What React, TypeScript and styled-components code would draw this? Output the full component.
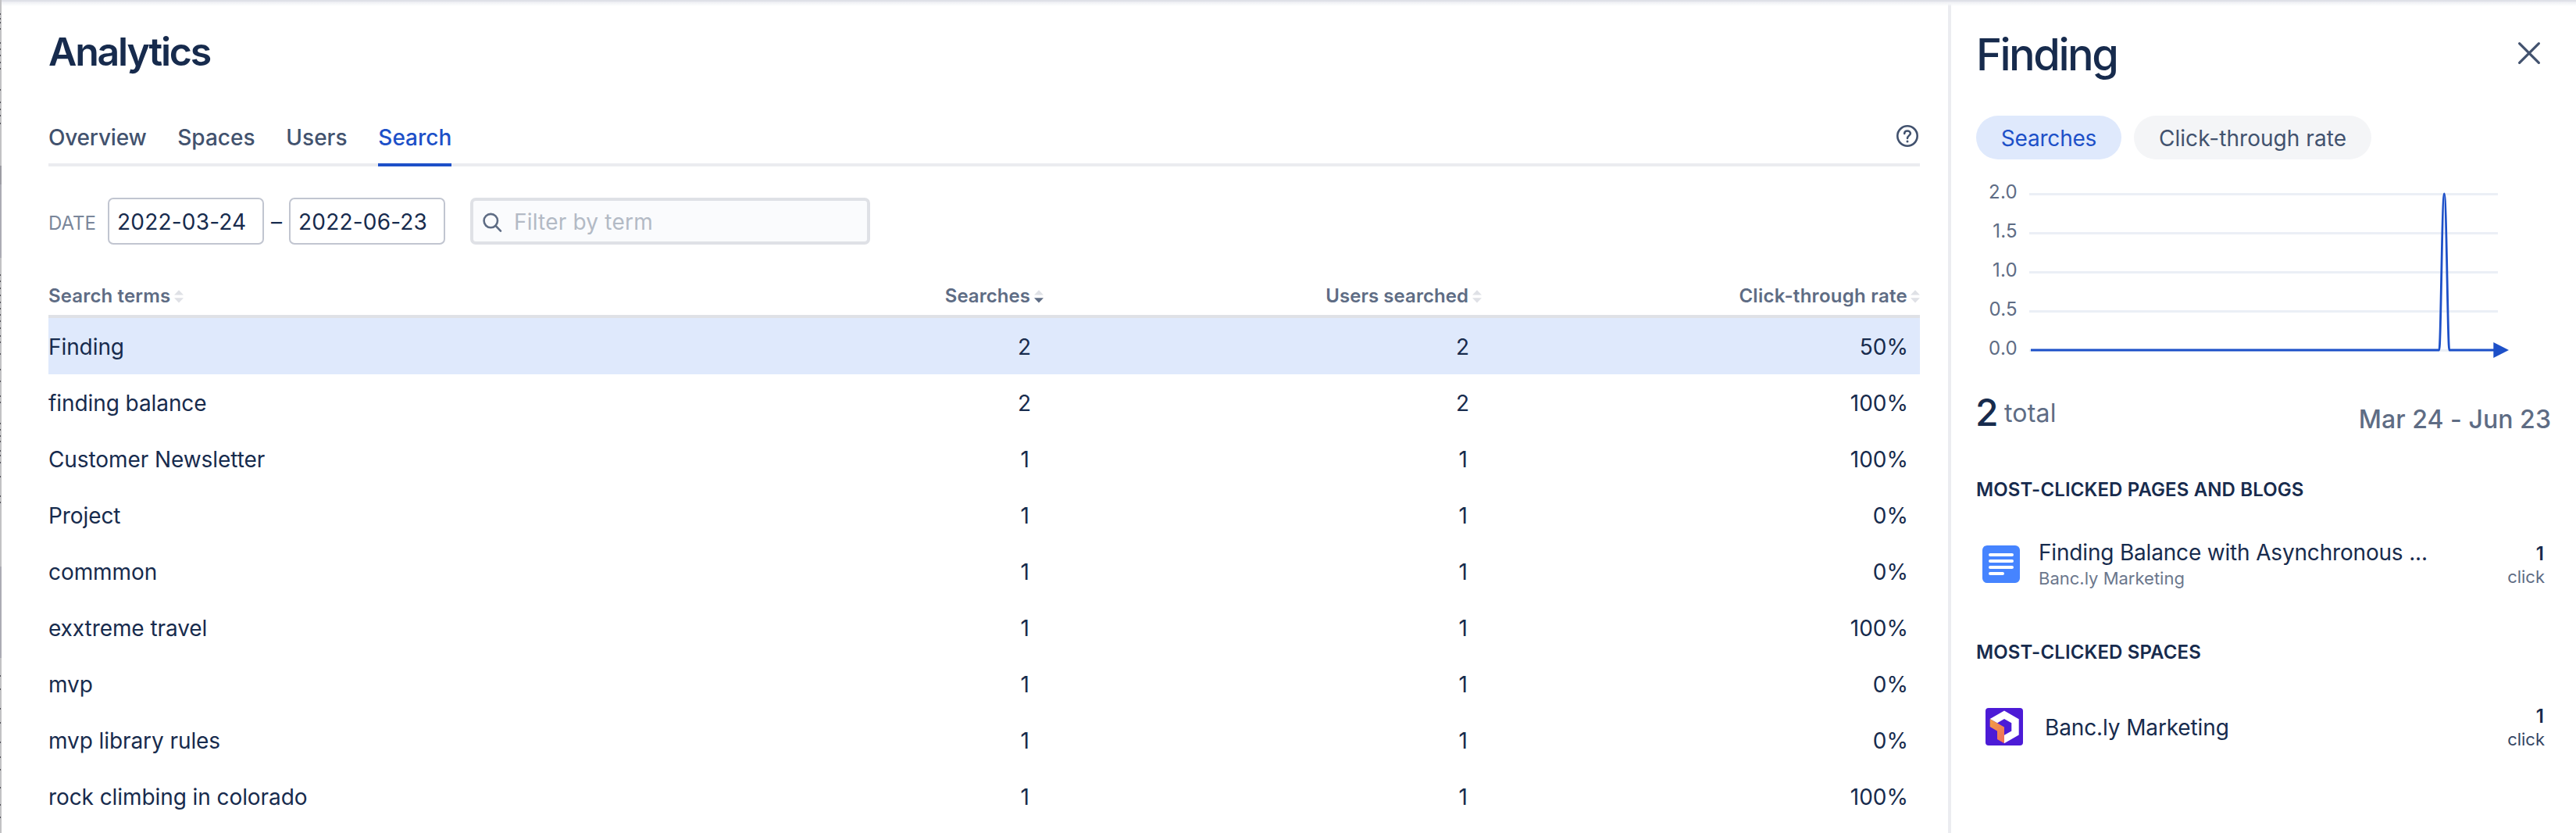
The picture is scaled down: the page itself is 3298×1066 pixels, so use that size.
import React from "react";
import styled, { createGlobalStyle } from "styled-components";

const GlobalStyle = createGlobalStyle`
  * { box-sizing: border-box; }
  body {
    margin: 0;
    background: #ffffff;
    color: #172b4d;
    font-family: Inter, "Liberation Sans", sans-serif;
    font-size: 28px;
  }
`;

const Page = styled.div`
  position: relative;
  display: flex;
  height: 1066px;
  overflow: hidden;
  background: #ffffff;
`;

const TopShadow = styled.div`
  position: absolute;
  top: 0;
  left: 2px;
  right: 0;
  height: 8px;
  background: linear-gradient(#dfe1e8 0 2px, #ebecf1 2px, #f6f7f9 5px, rgba(255, 255, 255, 0) 8px);
`;

/* Sliver of the window behind the page, with its text lines cut off. */
const marks = [
  18, 24, 29, 37, 55, 63, 71, 80, 88, 115, 131, 140, 148, 158, 352, 360, 369, 378, 387, 395, 403, 411,
  420, 430, 438, 453, 473, 488, 507, 515, 542, 550, 558, 565, 577, 583, 592, 610, 635, 643, 865, 882,
  907, 925, 950, 969, 985, 1008, 1030, 1046,
];
const markStops = marks
  .map((y) => `transparent ${y - 1}px, #55555b ${y - 1}px, #55555b ${y + 1}px, transparent ${y + 1}px`)
  .join(", ");

const Edge = styled.div`
  flex: none;
  width: 2px;
  background: linear-gradient(${markStops}) 0 0 / 1px 100% no-repeat,
    linear-gradient(
      #c2c2c4 212px,
      #9c9ca3 212px 236px,
      #acacb4 236px 330px,
      #c2c2c4 330px 725px,
      #acacb4 725px 842px,
      #c2c2c4 842px
    );
`;

const Main = styled.main`
  flex: 1;
  min-width: 0;
  padding: 36px 36px 0 60px;
`;

const Title = styled.h1`
  margin: 0;
  font-size: 50px;
  font-weight: 600;
  line-height: 61px;
  height: 60px;
  letter-spacing: -2.2px;
  color: #172b4d;
`;

const TabBar = styled.nav`
  display: flex;
  gap: 39.8px;
  height: 62px;
  margin-top: 55px;
  box-shadow: inset 0 -4px #ebecf0;
`;

const Tab = styled.div<{ $active?: boolean; $tight?: boolean }>`
  height: 62px;
  line-height: 50px;
  font-weight: 500;
  letter-spacing: ${(p) => (p.$tight ? "-0.2px" : "0")};
  color: ${(p) => (p.$active ? "#1d50c8" : "#42526e")};
  border-bottom: 4px solid ${(p) => (p.$active ? "#1d50c8" : "transparent")};
`;

const HelpButton = styled.div`
  width: 28px;
  height: 28px;
  margin: 9px 2px 0 auto;
  svg { display: block; }
`;

const Filters = styled.div`
  display: flex;
  height: 60px;
  margin-top: 40px;
`;

const FilterLabel = styled.label`
  width: 76px;
  padding-top: 5px;
  font-size: 24px;
  line-height: 56px;
  color: #7a869a;
`;

const DateField = styled.div`
  width: 200px;
  padding: 1px 0 0 10px;
  border: 2px solid #c1c5d0;
  border-radius: 7px;
  line-height: 56px;
  letter-spacing: 0.2px;
`;

const Dash = styled.span`
  width: 32px;
  padding-top: 2px;
  text-align: center;
  line-height: 58px;
`;

const TermField = styled.div`
  display: flex;
  width: 512px;
  margin-left: 32px;
  padding: 1px 0 0 12px;
  border: 4px solid #dfe1e6;
  border-radius: 7px;
  background: #fafbfd;
  line-height: 52px;
  letter-spacing: 0.2px;
  color: #b3bac5;
  svg { flex: none; margin: 14px 14px 0 0; }
`;

const columns = "713px 561px 561px 561px";

const HeadRow = styled.div`
  display: grid;
  grid-template-columns: ${columns};
  height: 53px;
  margin-top: 41px;
  border-bottom: 4px solid #dfe1e6;
  font-size: 24px;
  font-weight: 600;
  line-height: 49px;
  letter-spacing: 0.15px;
  color: #5e6c84;
`;

const HeadCell = styled.div<{ $right?: boolean; $wide?: boolean }>`
  display: flex;
  align-items: center;
  justify-content: ${(p) => (p.$right ? "flex-end" : "flex-start")};
  gap: ${(p) => (p.$wide ? 4 : 5)}px;
  letter-spacing: ${(p) => (p.$wide ? "0.28px" : p.$right ? "0.05px" : "0.15px")};
`;

const Row = styled.div<{ $selected?: boolean }>`
  display: grid;
  grid-template-columns: ${columns};
  height: 72px;
  padding-top: 1px;
  line-height: 72px;
  letter-spacing: -0.08px;
  background: ${(p) => (p.$selected ? "#dfe9fc" : "#ffffff")};
`;

const Num = styled.div<{ $pad: number }>`
  padding-right: ${(p) => p.$pad}px;
  text-align: right;
  letter-spacing: 0;
`;

const Panel = styled.aside`
  flex: none;
  width: 804px;
  border-left: 4px solid #ebecf0;
  padding: 36px 32px 0 32px;
`;

const PanelHead = styled.div`
  display: flex;
  justify-content: space-between;
  height: 68px;
  padding-right: 13px;
  svg { margin-top: 17px; }
`;

const PanelTitle = styled.h2`
  margin: 0;
  font-size: 56px;
  font-weight: 500;
  line-height: 68px;
  letter-spacing: -2.5px;
`;

const Pills = styled.div`
  display: flex;
  gap: 16px;
  margin-top: 44px;
`;

const Pill = styled.div<{ $active?: boolean }>`
  width: ${(p) => (p.$active ? 186 : 304)}px;
  height: 56px;
  padding-top: 1px;
  border-radius: 28px;
  text-align: center;
  line-height: 56px;
  letter-spacing: ${(p) => (p.$active ? "-0.2px" : "0.05px")};
  color: ${(p) => (p.$active ? "#1d50c8" : "#42526e")};
  background: ${(p) => (p.$active ? "#dfe9fc" : "#f4f5f7")};
`;

const Chart = styled.svg`
  display: block;
  text {
    font-family: Inter, sans-serif;
    font-size: 24px;
    letter-spacing: 0.3px;
    fill: #5e6c84;
    text-anchor: end;
  }
`;

const Summary = styled.div`
  display: flex;
  height: 60px;
  margin-top: 37px;
  line-height: 60px;
`;

const Total = styled.span`
  width: 36px;
  margin-left: -1px;
  font-size: 48px;
  font-weight: 500;
  line-height: 61px;
`;

const TotalLabel = styled.span`
  padding-top: 2px;
  margin-left: 1px;
  font-size: 32px;
  letter-spacing: 0.2px;
  color: #5e6c84;
`;

const Range = styled.span`
  margin-left: auto;
  padding-top: 10px;
  font-size: 32px;
  font-weight: 500;
  letter-spacing: 0.05px;
  color: #5e6c84;
`;

const SectionTitle = styled.h3<{ $top: number }>`
  margin: ${(p) => p.$top}px 0 0;
  font-size: 24px;
  font-weight: 600;
  line-height: 30px;
  letter-spacing: 0.12px;
`;

const Item = styled.div<{ $top: number }>`
  display: flex;
  height: 66px;
  margin-top: ${(p) => p.$top}px;
  padding-right: 8px;
`;

const ItemIcon = styled.div<{ $space?: boolean }>`
  margin: ${(p) => (p.$space ? "6px 28px 0 12px" : "6px 24px 0 8px")};
  svg { display: block; }
`;

const ItemText = styled.div``;

const ItemTitle = styled.div<{ $single?: boolean }>`
  line-height: ${(p) => (p.$single ? 62 : 30)}px;
  letter-spacing: ${(p) => (p.$single ? "-0.13px" : "-0.18px")};
  white-space: nowrap;
`;

const ItemSub = styled.div`
  font-size: 22px;
  line-height: 36px;
  color: #6b778c;
`;

const Clicks = styled.div<{ $dark?: boolean }>`
  margin-left: auto;
  text-align: right;
  font-size: 22px;
  line-height: 28px;
  color: ${(p) => (p.$dark ? "#344563" : "#5e6c84")};
  strong {
    display: block;
    padding-right: 1px;
    font-size: 24px;
    font-weight: 600;
    line-height: 33px;
    height: 32px;
    color: #172b4d;
  }
`;

const Sort = ({ down }: { down?: boolean }) => (
  <svg width="12" height="18" viewBox="0 0 12 18">
    <path d="M6 1.2 12 7.4H0z" fill="#dfe1e6" />
    <path d="M6 17.4 0 11.2H12z" fill={down ? "#5e6c84" : "#dfe1e6"} />
  </svg>
);

const HelpIcon = () => (
  <svg width="28" height="28" viewBox="-14 -14 28 28" fill="none" stroke="#42526e">
    <circle r="12.7" strokeWidth="2.6" />
    <path d="M-3.8-3.1C-3.8-5.3-2.1-6.6 0-6.6S3.9-5.1 3.9-3.2C3.9-.8 0-.3 0 3" strokeWidth="2.5" strokeLinecap="round" />
    <circle cy="7" r="1.5" fill="#42526e" stroke="none" />
  </svg>
);

const SearchIcon = () => (
  <svg width="26" height="26" viewBox="0 0 26 26" fill="none" stroke="#5e6c84" strokeWidth="2.6" strokeLinecap="round">
    <circle cx="10.3" cy="10.6" r="8.7" />
    <path d="M16.8 17.2 23 23.6" />
  </svg>
);

const CloseIcon = () => (
  <svg width="30" height="30" viewBox="0 0 30 30" stroke="#42526e" strokeWidth="3.2" strokeLinecap="round">
    <path d="M2.6 2.6 27.4 27.4M27.4 2.6 2.6 27.4" />
  </svg>
);

const PageIcon = () => (
  <svg width="48" height="48" viewBox="0 0 48 48">
    <rect width="48" height="48" rx="6" fill="#4684ff" />
    <path d="M10 12H38M10 20H38M10 28H38M10 36H26" stroke="#fff" strokeWidth="4" strokeLinecap="round" />
  </svg>
);

const SpaceLogo = () => (
  <svg width="48" height="48" viewBox="0 0 48 48">
    <defs>
      <linearGradient id="fold" x1="0" y1="0" x2="0.6" y2="1">
        <stop offset="0" stopColor="#f3a044" />
        <stop offset="1" stopColor="#f0725a" />
      </linearGradient>
    </defs>
    <rect width="48" height="48" rx="4" fill="#4c1bd6" />
    <path d="M24 3.5 42.7 14.2V34.6L24 45.3V34.8L33.3 29.4V19.2L24 14 15 19.2 5.7 14z" fill="#fff" />
    <path d="M5.7 14 24 24.6V45.3L15 40V29.4L5.7 24z" fill="url(#fold)" />
  </svg>
);

const ticks = ["2.0", "1.5", "1.0", "0.5", "0.0"];

const SearchesChart = () => (
  <Chart width="700" height="256" viewBox="0 0 700 256">
    {ticks.map((t, i) => (
      <g key={t}>
        <text x="53" y={50 + i * 50}>{t}</text>
        <rect x="68" y={43 + i * 50} width="600" height="3" fill="#ebeff6" />
      </g>
    ))}
    <path
      d="M70 244H592.8C595 244 596.4 44 599.3 44S603.8 244 605.8 244H664"
      fill="none"
      stroke="#1d50c8"
      strokeWidth="2.8"
    />
    <path d="M662.3 234 682 244 662.3 254z" fill="#1d50c8" />
  </Chart>
);

const rows: [string, string, string, string][] = [
  ["Finding", "2", "2", "50%"],
  ["finding balance", "2", "2", "100%"],
  ["Customer Newsletter", "1", "1", "100%"],
  ["Project", "1", "1", "0%"],
  ["commmon", "1", "1", "0%"],
  ["exxtreme travel", "1", "1", "100%"],
  ["mvp", "1", "1", "0%"],
  ["mvp library rules", "1", "1", "0%"],
  ["rock climbing in colorado", "1", "1", "100%"],
];

/* A trailing 1 has a narrower side bearing than the other digits. */
const countPad = (value: string) => (value === "1" ? 18 : 16);

export default function App() {
  return (
    <>
      <GlobalStyle />
      <Page>
        <Edge />
        <Main>
          <Title>Analytics</Title>
          <TabBar>
            <Tab $tight>Overview</Tab>
            <Tab>Spaces</Tab>
            <Tab>Users</Tab>
            <Tab $active>Search</Tab>
            <HelpButton><HelpIcon /></HelpButton>
          </TabBar>
          <Filters>
            <FilterLabel>DATE</FilterLabel>
            <DateField>2022-03-24</DateField>
            <Dash>–</Dash>
            <DateField>2022-06-23</DateField>
            <TermField><SearchIcon />Filter by term</TermField>
          </Filters>
          <HeadRow>
            <HeadCell>Search terms<Sort /></HeadCell>
            <HeadCell $right>Searches<Sort down /></HeadCell>
            <HeadCell $right>Users searched<Sort /></HeadCell>
            <HeadCell $right $wide>Click-through rate<Sort /></HeadCell>
          </HeadRow>
          {rows.map(([term, searches, users, rate], i) => (
            <Row key={term} $selected={i === 0}>
              <div>{term}</div>
              <Num $pad={countPad(searches)}>{searches}</Num>
              <Num $pad={countPad(users)}>{users}</Num>
              <Num $pad={15}>{rate}</Num>
            </Row>
          ))}
        </Main>
        <Panel>
          <PanelHead>
            <PanelTitle>Finding</PanelTitle>
            <CloseIcon />
          </PanelHead>
          <Pills>
            <Pill $active>Searches</Pill>
            <Pill>Click-through rate</Pill>
          </Pills>
          <SearchesChart />
          <Summary>
            <Total>2</Total>
            <TotalLabel>total</TotalLabel>
            <Range>Mar 24 - Jun 23</Range>
          </Summary>
          <SectionTitle $top={55}>MOST-CLICKED PAGES AND BLOGS</SectionTitle>
          <Item $top={50}>
            <ItemIcon><PageIcon /></ItemIcon>
            <ItemText>
              <ItemTitle>Finding Balance with Asynchronous ...</ItemTitle>
              <ItemSub>Banc.ly Marketing</ItemSub>
            </ItemText>
            <Clicks><strong>1</strong>click</Clicks>
          </Item>
          <SectionTitle $top={62}>MOST-CLICKED SPACES</SectionTitle>
          <Item $top={50}>
            <ItemIcon $space><SpaceLogo /></ItemIcon>
            <ItemText>
              <ItemTitle $single>Banc.ly Marketing</ItemTitle>
            </ItemText>
            <Clicks $dark><strong>1</strong>click</Clicks>
          </Item>
        </Panel>
        <TopShadow />
      </Page>
    </>
  );
}
